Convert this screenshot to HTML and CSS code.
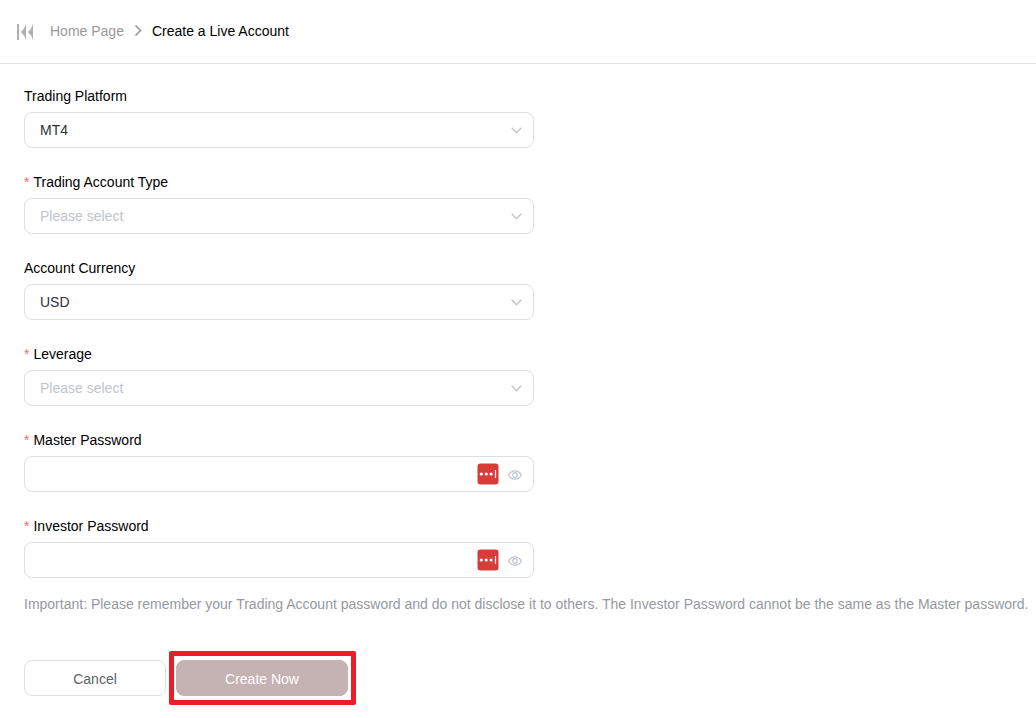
FILE: index.html
```html
<!DOCTYPE html>
<html lang="en">
<head>
<meta charset="utf-8">
<meta name="viewport" content="width=device-width, initial-scale=1">
<title>Create a Live Account</title>
<link rel="stylesheet" href="styles.css">
</head>
<body>
<svg class="sprite" aria-hidden="true">
  <symbol id="chevron" viewBox="0 0 12 8"><path d="M.7.8 5.500 5.800 10.300.8" fill="none" stroke="currentColor" stroke-width="1.300"/></symbol>
  <symbol id="manager" viewBox="0 0 22 22">
    <rect x="0.5" y="0.5" width="21" height="21" rx="3" fill="#d63d38"/>
    <circle cx="4.3" cy="11" r="1.6" fill="#fff"/><circle cx="9.2" cy="11" r="1.6" fill="#fff"/><circle cx="14.1" cy="11" r="1.6" fill="#fff"/>
    <path d="M18.5 7v8" stroke="#fff" stroke-width="1.2"/>
  </symbol>
  <symbol id="eye" viewBox="0 0 14 10">
    <path d="M.7 5C2 2.200 4.300.8 7 .8S12 2.200 13.300 5C12 7.800 9.700 9.200 7 9.200S2 7.800.7 5Z" fill="none" stroke="currentColor" stroke-width="1.200"/>
    <circle cx="7" cy="5" r="2.300" fill="none" stroke="currentColor" stroke-width="1.200"/>
  </symbol>
</svg>
<header class="topbar">
  <button class="back" type="button" aria-label="Back">
    <svg width="17" height="16" viewBox="0 0 17 16" fill="#b1afad"><path d="M0 0h2v16H0zM9 0v16Q7.500 11 4 8 7.500 5 9 0ZM16 0v16Q14.500 11 11 8 14.500 5 16 0Z"/></svg>
  </button>
  <nav class="crumbs" aria-label="Breadcrumb">
    <a class="crumb-link" href="#">Home Page</a>
    <svg class="crumb-sep" width="8" height="12" viewBox="0 0 8 12"><path d="m1.500.5 5 5-5 5" fill="none" stroke="#969696" stroke-width="1.600"/></svg>
    <span class="crumb-current">Create a Live Account</span>
  </nav>
</header>
<main class="content">
  <form class="form">
    <div class="field">
      <label class="label" for="platform">Trading Platform</label>
      <div class="control"><select class="input" id="platform"><option>MT4</option></select><svg class="chevron"><use href="#chevron"/></svg></div>
    </div>
    <div class="field">
      <label class="label required" for="type">Trading Account Type</label>
      <div class="control"><select class="input placeholder" id="type"><option>Please select</option></select><svg class="chevron"><use href="#chevron"/></svg></div>
    </div>
    <div class="field">
      <label class="label" for="currency">Account Currency</label>
      <div class="control"><select class="input" id="currency"><option>USD</option></select><svg class="chevron"><use href="#chevron"/></svg></div>
    </div>
    <div class="field">
      <label class="label required" for="leverage">Leverage</label>
      <div class="control"><select class="input placeholder" id="leverage"><option>Please select</option></select><svg class="chevron"><use href="#chevron"/></svg></div>
    </div>
    <div class="field">
      <label class="label required" for="master">Master Password</label>
      <div class="control"><input class="input" id="master" type="password"><div class="tools"><svg class="manager"><use href="#manager"/></svg><button class="reveal" type="button" aria-label="Show password"><svg class="eye"><use href="#eye"/></svg></button></div></div>
    </div>
    <div class="field">
      <label class="label required" for="investor">Investor Password</label>
      <div class="control"><input class="input" id="investor" type="password"><div class="tools"><svg class="manager"><use href="#manager"/></svg><button class="reveal" type="button" aria-label="Show password"><svg class="eye"><use href="#eye"/></svg></button></div></div>
    </div>
    <p class="note">Important: Please remember your Trading Account password and do not disclose it to others. The Investor Password cannot be the same as the Master password.</p>
    <div class="actions">
      <button class="btn cancel" type="button">Cancel</button>
      <div class="highlight"><button class="btn create" type="submit">Create Now</button></div>
    </div>
  </form>
</main>
</body>
</html>
```
FILE: styles.css
```css
* { box-sizing: border-box; }
body {
  margin: 0;
  background: #fff;
  color: #000;
  font: 14px/16px "Liberation Sans", Arial, sans-serif;
}
button, input, select { font: inherit; }
.sprite { position: absolute; width: 0; height: 0; }
.topbar {
  display: flex;
  align-items: center;
  gap: 16px;
  height: 64px;
  padding: 0 17px;
  border-bottom: 1px solid #e2e2e8;
}
.back, .reveal {
  display: flex;
  padding: 0;
  border: 0;
  background: none;
  cursor: pointer;
}
.crumbs { display: flex; align-items: center; gap: 10px; padding-bottom: 2px; }
.crumb-link { color: #999; text-decoration: none; }
.content { padding: 24px 0 12px 24px; }
.form { display: flex; flex-direction: column; }
.field {
  display: flex;
  flex-direction: column;
  gap: 8px;
  width: 100%;
  max-width: 510px;
  margin-bottom: 26px;
}
.required::before { content: "*"; margin-right: 4px; color: #f56c6c; }
.control { position: relative; }
.input {
  display: block;
  width: 100%;
  height: 36px;
  padding: 0 15px;
  border: 1px solid #dcdfe6;
  border-radius: 8px;
  background: #fff;
  color: #303133;
  appearance: none;
}
.placeholder { color: #c0c4cc; }
.chevron {
  position: absolute;
  top: 15px;
  right: 11px;
  width: 12px;
  height: 8px;
  color: #c0c4cc;
  pointer-events: none;
}
.tools {
  position: absolute;
  inset: 0 12px 0 auto;
  display: flex;
  align-items: center;
  gap: 9px;
}
.manager { width: 22px; height: 22px; }
.eye { width: 14px; height: 10px; margin-top: 2px; color: #c0c4cc; }
.note { margin: -8px 0 48px; color: #96999d; }
.actions { display: flex; gap: 10px; }
.btn {
  display: block;
  height: 36px;
  padding: 2px 0 0;
  border: 1px solid #dcdfe6;
  border-radius: 8px;
  cursor: pointer;
}
.cancel { width: 142px; background: #fff; color: #606266; }
.create { width: 172px; border-color: #c5b2b2; background: #c5b2b2; color: #fff; }
.highlight { position: relative; }
.highlight::after {
  content: "";
  position: absolute;
  inset: -9px -8px -9px -7px;
  border: 5px solid #ee1c25;
  border-radius: 2px;
  pointer-events: none;
}
```
